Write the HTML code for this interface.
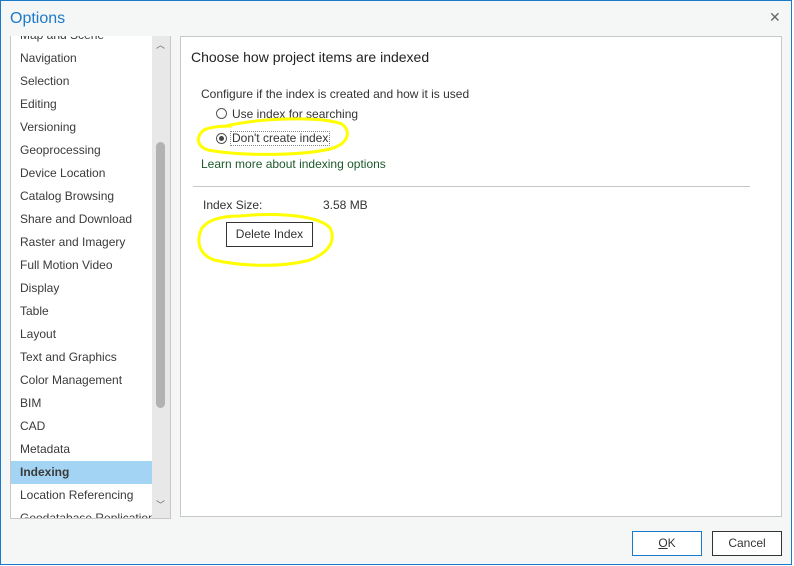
<!DOCTYPE html>
<html><head><meta charset="utf-8"><style>
*{margin:0;padding:0;box-sizing:border-box}
body{width:794px;height:566px;background:#fff;font-family:"Liberation Sans",sans-serif;color:#333;position:relative;overflow:hidden}
.win{position:absolute;left:0;top:0;width:792px;height:565px;border:1px solid #1979ca;background:#f5f6f6}
.title{position:absolute;left:9px;top:9px;font-size:16px;color:#1b7ac8}
.close{position:absolute;left:768px;top:8px;font-size:14px;color:#666}
.list{position:absolute;left:10px;top:36px;width:161px;height:483px;border:1px solid #c8c8c8;border-top:none;background:#fff;overflow:hidden}
.items{position:absolute;left:0;top:-12.5px;width:141px}
.it{height:23px;line-height:23px;padding-left:9px;font-size:12px;color:#3a3a3a;white-space:nowrap}
.sel{background:#a4d4f3;font-weight:bold}
.sb{position:absolute;left:141px;top:0;width:18px;height:482px;background:#e8e8e8}
.thumb{position:absolute;left:4px;top:106px;width:9px;height:266px;background:#b2b2b2;border-radius:5px}
.arr{position:absolute;left:4px;font-size:9px;color:#666}
.panel{position:absolute;left:180px;top:36px;width:602px;height:481px;border:1px solid #c8c8c8;background:#fff}
.t{position:absolute;font-size:12px;white-space:nowrap;color:#333}
.btn{position:absolute;height:25px;border:1px solid #333;background:#fff;font-size:12px;text-align:center;line-height:23px}
.radio{position:absolute;width:11px;height:11px;border:1px solid #555;border-radius:50%;background:#fff}
</style></head><body>
<div class="win">
<div class="title">Options</div>
<div class="close">✕</div>
</div>
<div class="list">
<div class="items">
<div class="it">Map and Scene</div>
<div class="it">Navigation</div>
<div class="it">Selection</div>
<div class="it">Editing</div>
<div class="it">Versioning</div>
<div class="it">Geoprocessing</div>
<div class="it">Device Location</div>
<div class="it">Catalog Browsing</div>
<div class="it">Share and Download</div>
<div class="it">Raster and Imagery</div>
<div class="it">Full Motion Video</div>
<div class="it">Display</div>
<div class="it">Table</div>
<div class="it">Layout</div>
<div class="it">Text and Graphics</div>
<div class="it">Color Management</div>
<div class="it">BIM</div>
<div class="it">CAD</div>
<div class="it">Metadata</div>
<div class="it sel">Indexing</div>
<div class="it">Location Referencing</div>
<div class="it">Geodatabase Replication</div>
</div>
<div class="sb"><div class="arr" style="top:2px">︿</div><div class="thumb"></div><div class="arr" style="top:462px">﹀</div></div>
</div>
<div class="panel"></div>
<div class="t" style="left:191px;top:49px;font-size:14px;color:#222">Choose how project items are indexed</div>
<div class="t" style="left:201px;top:87px">Configure if the index is created and how it is used</div>
<div class="radio" style="left:216px;top:108px"></div>
<div class="t" style="left:232px;top:107px">Use index for searching</div>
<div class="radio" style="left:216px;top:133px"><div style="position:absolute;left:2px;top:2px;width:5px;height:5px;border-radius:50%;background:#444"></div></div>
<div class="t" style="left:230px;top:131px;border:1px dotted #888;padding:0 1px;height:15px;line-height:13px">Don't create index</div>
<div class="t" style="left:201px;top:157px;color:#1d5a2b">Learn more about indexing options</div>
<div style="position:absolute;left:193px;top:186px;width:557px;height:1px;background:#c8c8c8"></div>
<div class="t" style="left:203px;top:198px">Index Size:</div>
<div class="t" style="left:323px;top:198px">3.58 MB</div>
<div class="btn" style="left:226px;top:222px;width:87px">Delete Index</div>
<svg style="position:absolute;left:0;top:0" width="794" height="566">
<path d="M226 126 C260 118 320 116 342 124 C352 132 348 144 330 149 C300 156 240 156 208 150 C196 146 196 136 204 130 C210 127 220 126 232 126" fill="none" stroke="#ffff00" stroke-width="3"/>
<path d="M240 216 C280 212 320 216 330 228 C336 240 330 252 310 260 C280 268 240 266 214 260 C198 254 196 240 202 228 C208 220 220 216 240 216" fill="none" stroke="#ffff00" stroke-width="3"/>
</svg>
<div class="btn" style="left:632px;top:531px;width:70px;border-color:#1979ca"><u>O</u>K</div>
<div class="btn" style="left:712px;top:531px;width:70px">Cancel</div>
</body></html>
